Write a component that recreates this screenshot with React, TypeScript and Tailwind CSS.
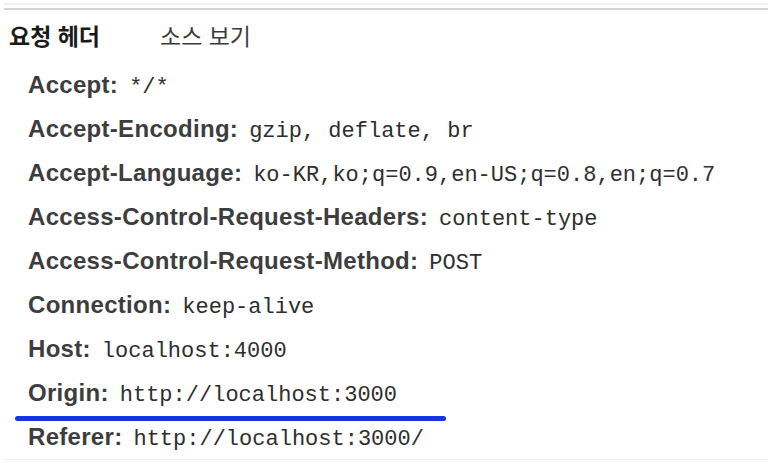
import React from 'react';

const headers: [string, string][] = [
  ['Accept', '*/*'],
  ['Accept-Encoding', 'gzip, deflate, br'],
  ['Accept-Language', 'ko-KR,ko;q=0.9,en-US;q=0.8,en;q=0.7'],
  ['Access-Control-Request-Headers', 'content-type'],
  ['Access-Control-Request-Method', 'POST'],
  ['Connection', 'keep-alive'],
  ['Host', 'localhost:4000'],
  ['Origin', 'http://localhost:3000'],
  ['Referer', 'http://localhost:3000/'],
];

const App: React.FC = () => {
  return (
    <div className="w-[772px] h-[463px] bg-white overflow-hidden font-['Liberation_Sans','Noto_Sans_CJK_KR',sans-serif]">
      <div className="mx-[4px] mt-[3px] h-[2px] bg-[#f1f1f3]" />
      <div className="mx-[4px] mt-[3px] h-[2px] bg-[#d3d3d8]" />

      <div className="flex items-center h-[28px] mt-[13px] pl-[9px] text-[23px]">
        <span className="font-bold text-[#1a1a1a] w-[151px]">요청 헤더</span>
        <span className="text-[#3c3c3c]">소스 보기</span>
      </div>

      <div className="flex flex-col mt-[12px]">
        {headers.map(([name, value]) => (
          <div key={name} className="relative flex items-baseline h-[44px] leading-[44px] pl-[28px]">
            <span className="font-bold text-[24px] text-[#3d3d3d] tracking-[0.3px]">{name}:</span>
            <span className="ml-[11px] font-['Liberation_Mono',monospace] text-[22px] text-[#2e2e2e]">{value}</span>
            {name === 'Origin' && (
              <div className="absolute left-[15px] bottom-[-6px] w-[431px] h-[5px] rounded-full bg-[#1434e6]" />
            )}
          </div>
        ))}
      </div>
      <div className="mx-[4px] h-px bg-[#f3f3f5]" />
    </div>
  );
};

export default App;
